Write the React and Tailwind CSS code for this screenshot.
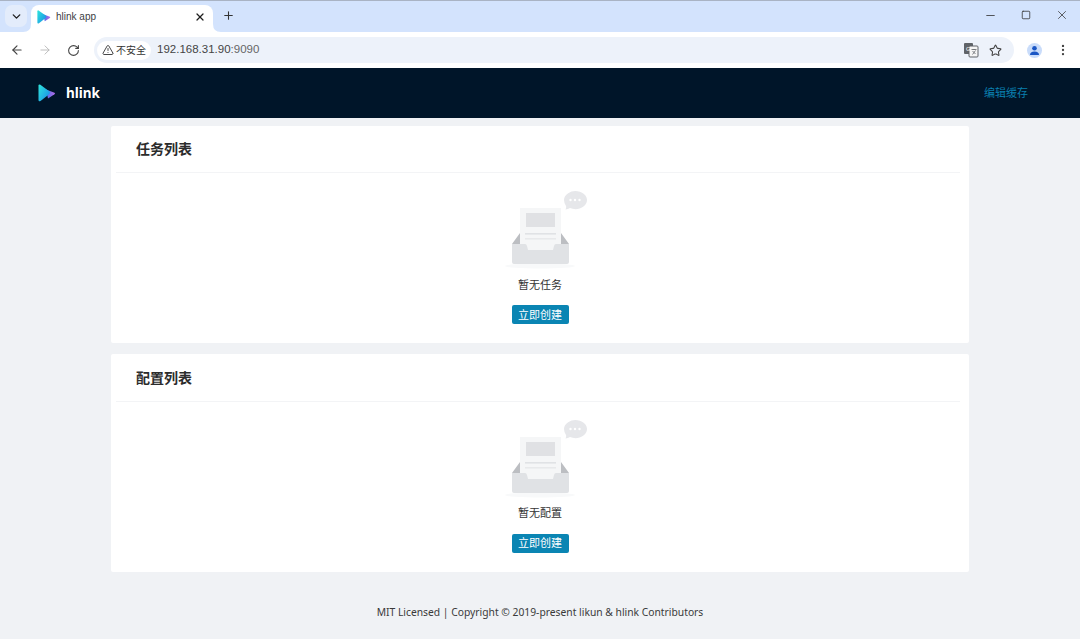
import React from "react";
import { ArrowLeft, ArrowRight, RotateCw, TriangleAlert, Star, ChevronDown, X, Plus, Minus, Square, EllipsisVertical } from "lucide-react";

const cjk = "font-['Liberation_Sans','Noto_Sans_CJK_SC',sans-serif]";

function Logo({ size, id }) {
  return (
    <svg width={size} height={size} viewBox="0 0 18 18" className="shrink-0">
      <defs>
        <linearGradient id={id} x1="0" y1="0" x2="1" y2="0.8">
          <stop offset="0" stopColor="#2ee6dc" />
          <stop offset="1" stopColor="#1b8fe6" />
        </linearGradient>
        <linearGradient id={`${id}p`} x1="0" y1="0" x2="1" y2="0">
          <stop offset="0" stopColor="#4f6fe8" />
          <stop offset="1" stopColor="#b46be6" />
        </linearGradient>
      </defs>
      <path d="M8 5.500 L16.500 8.700 Q17.800 9.300 16.500 10.200 L10 14.500 Z" fill={`url(#${id}p)`} />
      <path d="M0.500 1.500 Q0.500 0.300 2 0.500 L11.500 7.500 Q12.500 8.500 11.500 10 L2.500 17 Q0.500 17.800 0.500 16 Z" fill={`url(#${id})`} />
    </svg>
  );
}

function Illustration() {
  return (
    <svg width="90" height="84" viewBox="0 0 90 84" className="block">
      <ellipse cx="41" cy="80" rx="35" ry="2.500" fill="#f8f9fa" />
      <path d="M65 14 a11.500 9 0 1 1 6 8 q-2 1 -4.500 1.500 q1 -2 0.500 -3.500 q-2 -3 -2 -6 z" fill="#e6e7ea" />
      <circle cx="71.500" cy="14" r="1.200" fill="#fff" />
      <circle cx="76" cy="14" r="1.200" fill="#fff" />
      <circle cx="80.500" cy="14" r="1.200" fill="#fff" />
      <path d="M13 58 L21 47 V58 Z M70 58 L62 47 V58 Z" fill="#bcbec2" />
      <path d="M21 22 H62 V66 H21 Z" fill="#f5f6f7" />
      <rect x="27" y="27" width="29" height="14" fill="#e0e1e4" />
      <rect x="26" y="47" width="31" height="1.600" fill="#e0e2e5" />
      <rect x="26" y="52" width="31" height="1.600" fill="#e8e9eb" />
      <path d="M13 58 H26 Q27.500 58 28 60 L29 64 H54 L55 60 Q55.500 58 57 58 H70 V76 Q70 78 68 78 H15 Q13 78 13 76 Z" fill="#e0e2e5" />
    </svg>
  );
}

function Card({ title, empty, cls, headCls, titleCls, textCls, btnCls }) {
  return (
    <section className={`bg-white rounded-[2px] ${cls}`}>
      <div className={`ml-[5px] mr-[9px] border-b border-[#f3f4f6] pl-5 flex items-center ${headCls}`}>
        <h2 className={`text-[14px] font-bold text-[#2c2c2c] leading-none ${titleCls}`}>{title}</h2>
      </div>
      <div className="flex flex-col items-center">
        <div className="mt-[13px] ml-[8px]"><Illustration /></div>
        <p className={`text-[11px] leading-[14px] text-[#333] ${textCls}`}>{empty}</p>
        <button className={`w-[57px] h-[19px] rounded-[2px] bg-[#0a85b3] text-white text-[11px] leading-none flex items-center justify-center ${btnCls}`}>
          立即创建
        </button>
      </div>
    </section>
  );
}

export default function App() {
  return (
    <div className={`w-[1080px] h-[639px] overflow-hidden flex flex-col bg-[#f0f2f5] ${cjk}`}>
      {/* tab strip */}
      <div className="h-[32px] bg-[#d3e3fd] border-t border-[#a9b3c4] flex items-end text-[#1f1f1f] shrink-0">
        <div className="w-[22px] h-[22px] ml-[5px] mb-[5px] rounded-[7px] bg-[#e3ecfb] flex items-center justify-center">
          <ChevronDown size={13} strokeWidth={2.500} />
        </div>
        <div className="relative w-[182px] h-[27px] ml-[4px] bg-white rounded-t-[8px] flex items-center pl-[6px] pr-[7px] pb-[4px]">
          <svg width="8" height="8" viewBox="0 0 8 8" className="absolute bottom-0 left-[-8px]"><path d="M8 0 V8 H0 Q8 8 8 0 Z" fill="#fff" /></svg>
          <svg width="8" height="8" viewBox="0 0 8 8" className="absolute bottom-0 right-[-8px]"><path d="M0 0 V8 H8 Q0 8 0 0 Z" fill="#fff" /></svg>
          <Logo size={14} id="tabLogo" />
          <span className="ml-[5px] text-[10px] text-[#3c4043] flex-1">hlink app</span>
          <X size={12} strokeWidth={2.500} />
        </div>
        <Plus size={13} strokeWidth={2} className="ml-[9px] mb-[10px] text-[#333]" />
        <div className="ml-auto mb-[10px] flex items-center text-[#333]">
          <Minus size={13} strokeWidth={1.500} className="mr-[24px]" />
          <Square size={10} strokeWidth={1.900} className="mr-[24px]" />
          <X size={14} strokeWidth={1.300} className="mr-[11px]" />
        </div>
      </div>
      {/* toolbar */}
      <div className="h-[36px] bg-white flex items-center shrink-0">
        <ArrowLeft size={14} strokeWidth={2} className="ml-[10px] text-[#444]" />
        <ArrowRight size={14} strokeWidth={1.500} className="ml-[14px] text-[#b5b5b5]" />
        <RotateCw size={13} strokeWidth={2} className="ml-[15px] text-[#444]" />
        <div className="ml-[14px] w-[920px] h-[26px] rounded-full bg-[#edf2fa] flex items-center pl-[3px]">
          <div className="h-[19px] w-[54px] rounded-full bg-white flex items-center justify-center text-[10px] text-[#333]">
            <TriangleAlert size={12} strokeWidth={1.800} className="mr-[2px]" />不安全
          </div>
          <span className="ml-[6px] text-[11.500px] text-[#444]">192.168.31.90<span className="text-[#666]">:9090</span></span>
          <svg width="16" height="16" viewBox="0 0 16 16" className="ml-auto">
            <rect x="1" y="1" width="9" height="11" rx="1" fill="#5f6368" />
            <rect x="6" y="4" width="9" height="11" rx="1" fill="#f5f5f5" stroke="#5f6368" />
            <text x="3" y="9" fontSize="6" fill="#fff" fontFamily="Liberation Sans">G</text>
            <path d="M8.500 7.500h5M11 7v1M9.500 12.500l3-4M9.500 9l3 3" stroke="#5f6368" strokeWidth="0.800" fill="none" />
          </svg>
          <Star size={13} strokeWidth={2} className="ml-[10px] mr-[12px] text-[#444]" />
        </div>
        <div className="ml-[13px] w-[15px] h-[15px] rounded-full bg-[#c9dcfa] flex items-center justify-center overflow-hidden">
          <svg width="11" height="11" viewBox="0 0 11 11"><circle cx="5.500" cy="3.300" r="2.300" fill="#1a56c4" /><path d="M1 10 Q1 6.500 5.500 6.500 Q10 6.500 10 10 Z" fill="#1a56c4" /></svg>
        </div>
        <EllipsisVertical size={14} strokeWidth={2} className="ml-[14px] text-[#444]" />
      </div>
      {/* app header */}
      <header className="h-[50px] bg-[#001529] flex items-center pl-[38px] pr-[52px] shrink-0">
        <Logo size={18} id="headLogo" />
        <span className="ml-[10px] text-white text-[13.500px] font-bold font-['Noto_Sans',sans-serif]">hlink</span>
        <a className="ml-auto text-[11px] text-[#0a7fae]">编辑缓存</a>
      </header>
      {/* content */}
      <main className="w-[858px] mx-auto pt-[8px] flex-1 flex flex-col">
        <Card title="任务列表" empty="暂无任务" cls="h-[217px]" headCls="h-[47px]" titleCls="pt-[0px]" textCls="mt-[8px]" btnCls="mt-[13px] pt-[2px]" />
        <Card title="配置列表" empty="暂无配置" cls="h-[218px] mt-[11px]" headCls="h-[48px]" titleCls="pt-[1px]" textCls="mt-[7px]" btnCls="mt-[14px]" />
        <footer className="mt-[33px] text-center text-[10.300px] leading-[14px] text-[#3a3a3a] font-['Noto_Sans',sans-serif]">
          MIT Licensed | Copyright © 2019-present likun &amp; hlink Contributors
        </footer>
      </main>
    </div>
  );
}
